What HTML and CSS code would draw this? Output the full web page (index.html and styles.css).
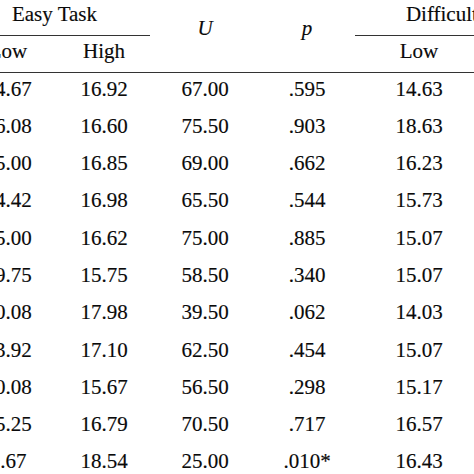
FILE: index.html
```html
<!DOCTYPE html>
<html>
<head>
<meta charset="utf-8">
<link rel="stylesheet" href="styles.css">
</head>
<body>
<div class="table">
  <div class="grp easy">Easy Task</div>
  <div class="var">U</div>
  <div class="var">p</div>
  <div class="grp diff">Difficult Task</div>
  <div class="sub">Low</div>
  <div class="sub">High</div>
  <div class="sub">Low</div>
  <div class="sub">High</div>

  <div class="c">14.67</div><div class="c">16.92</div><div class="c">67.00</div><div class="c">.595</div><div class="c">14.63</div><div class="c">16.40</div>
  <div class="c">16.08</div><div class="c">16.60</div><div class="c">75.50</div><div class="c">.903</div><div class="c">18.63</div><div class="c">18.21</div>
  <div class="c">15.00</div><div class="c">16.85</div><div class="c">69.00</div><div class="c">.662</div><div class="c">16.23</div><div class="c">16.88</div>
  <div class="c">14.42</div><div class="c">16.98</div><div class="c">65.50</div><div class="c">.544</div><div class="c">15.73</div><div class="c">16.52</div>
  <div class="c">15.00</div><div class="c">16.62</div><div class="c">75.00</div><div class="c">.885</div><div class="c">15.07</div><div class="c">15.43</div>
  <div class="c">19.75</div><div class="c">15.75</div><div class="c">58.50</div><div class="c">.340</div><div class="c">15.07</div><div class="c">16.21</div>
  <div class="c">10.08</div><div class="c">17.98</div><div class="c">39.50</div><div class="c">.062</div><div class="c">14.03</div><div class="c">17.29</div>
  <div class="c">13.92</div><div class="c">17.10</div><div class="c">62.50</div><div class="c">.454</div><div class="c">15.07</div><div class="c">16.64</div>
  <div class="c">10.08</div><div class="c">15.67</div><div class="c">56.50</div><div class="c">.298</div><div class="c">15.17</div><div class="c">16.79</div>
  <div class="c">15.25</div><div class="c">16.79</div><div class="c">70.50</div><div class="c">.717</div><div class="c">16.57</div><div class="c">16.07</div>
  <div class="c">9.67</div><div class="c">18.54</div><div class="c">25.00</div><div class="c">.010*</div><div class="c">16.43</div><div class="c">16.00</div>
</div>
</body>
</html>
```

FILE: styles.css
```css
html, body {
  margin: 0;
  padding: 0;
  background: #ffffff;
  overflow: hidden;
}

.table {
  margin-left: -41px;
  width: 614px;
  display: grid;
  grid-template-columns: 98px 94px 108px 96px 128px 90px;
  font-family: "Liberation Serif", "Times New Roman", serif;
  font-size: 21px;
  color: #0a0a0a;
  -webkit-text-stroke: 0.15px #0a0a0a;
  text-align: center;
}

.grp {
  grid-column: span 2;
  line-height: 28px;
  padding-bottom: 7px;
  border-bottom: 1px solid #333333;
}

.easy {
  margin-right: 1px;
}

.var {
  grid-row: span 2;
  font-style: italic;
  line-height: 28px;
  padding-top: 14px;
  border-bottom: 1px solid #333333;
}

.sub {
  line-height: 28px;
  padding-top: 1px;
  padding-bottom: 7px;
  border-bottom: 1px solid #333333;
}

.c {
  line-height: 28px;
  height: 28px;
  padding-top: 1.5px;
  padding-bottom: 7.8px;
}
```
